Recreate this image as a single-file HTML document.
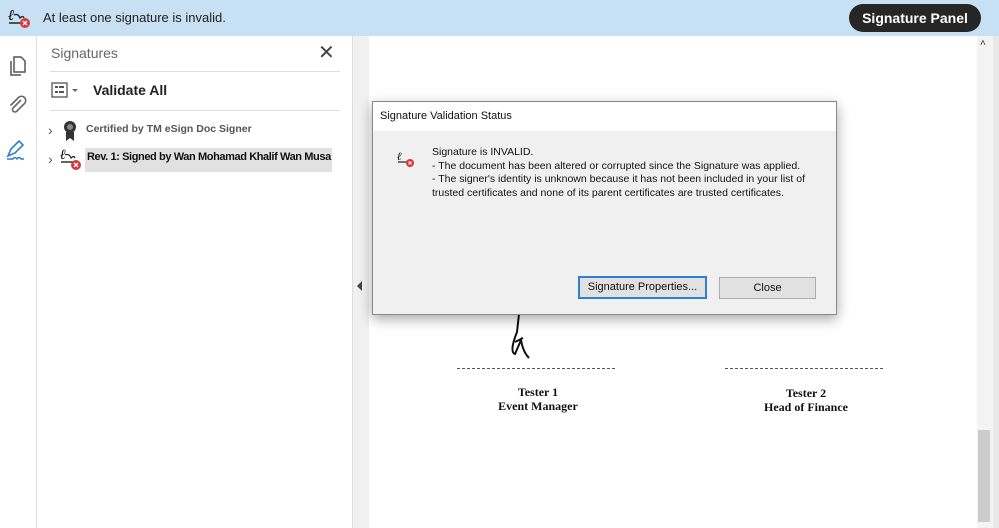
<!DOCTYPE html>
<html><head><style>
*{margin:0;padding:0;box-sizing:border-box}
body{width:999px;height:528px;overflow:hidden;position:relative;background:#fff;font-family:"Liberation Sans",sans-serif}
.abs{position:absolute}
</style></head><body>
<div class="abs" style="left:0;top:0;width:999px;height:36px;background:#c7e0f4"></div>
<svg class="abs" style="left:8px;top:6px" width="24" height="24"><text x="0" y="14" font-family="Liberation Serif" font-style="italic" font-weight="bold" font-size="15">&#x2113;</text><path d="M6 9 q4 -2 6 3 q3 -3 4 0" stroke="#222" fill="none" stroke-width="1.3"/><line x1="1" y1="17" x2="14" y2="17" stroke="#222" stroke-width="1.5"/><circle cx="17" cy="17" r="5" fill="#d7373f"/><path d="M15 15l4 4M19 15l-4 4" stroke="#fff" stroke-width="1.3"/></svg>
<div class="abs" style="left:43px;top:10px;font-size:13px;color:#222">At least one signature is invalid.</div>
<div class="abs" style="left:849px;top:4px;width:132px;height:28px;border-radius:14px;background:#262626;color:#fff;font-size:14px;font-weight:bold;text-align:center;line-height:28px">Signature Panel</div>
<div class="abs" style="left:0;top:36px;width:37px;height:492px;background:#fff;border-right:1px solid #ddd"></div>
<svg class="abs" style="left:7px;top:55px" width="22" height="22"><path d="M7 2h7l4 4v11H7z" fill="none" stroke="#555" stroke-width="1.5"/><path d="M4 6v14h10" fill="none" stroke="#555" stroke-width="1.5"/></svg>
<svg class="abs" style="left:6px;top:94px" width="22" height="22"><path d="M15 6l-8 8a2.5 2.5 0 0 0 3.5 3.5l8-8a4 4 0 0 0-6-6l-8 8" fill="none" stroke="#666" stroke-width="1.6"/></svg>
<svg class="abs" style="left:4px;top:138px" width="24" height="24"><path d="M4 18l3-7 8-8 4 4-8 8z" fill="none" stroke="#2d7fc7" stroke-width="1.6"/><path d="M3 21h6q2-3 4 0 2-3 4 0h3" fill="none" stroke="#2d7fc7" stroke-width="1.4"/></svg>
<div class="abs" style="left:51px;top:45px;font-size:14px;color:#666">Signatures</div>
<div class="abs" style="left:318px;top:40px;font-size:20px;color:#444">✕</div>
<div class="abs" style="left:50px;top:71px;width:290px;height:1px;background:#ddd"></div>
<svg class="abs" style="left:51px;top:82px" width="30" height="18"><rect x="1" y="1" width="15" height="14" fill="none" stroke="#555" stroke-width="1.3"/><rect x="4" y="4" width="3" height="2" fill="#555"/><rect x="4" y="9" width="3" height="2" fill="#555"/><rect x="8" y="4" width="5" height="2" fill="#555"/><rect x="8" y="9" width="5" height="2" fill="#555"/><path d="M21 7h6l-3 3z" fill="#666"/></svg>
<div class="abs" style="left:93px;top:82px;font-size:14px;font-weight:bold;color:#222">Validate All</div>
<div class="abs" style="left:50px;top:110px;width:290px;height:1px;background:#ddd"></div>
<div class="abs" style="left:48px;top:122px;font-size:14px;color:#555">›</div>
<svg class="abs" style="left:62px;top:120px" width="16" height="22"><circle cx="8" cy="7" r="6" fill="#333"/><circle cx="8" cy="7" r="3" fill="#888"/><path d="M4 12v9l4-3 4 3v-9" fill="#333"/></svg>
<div class="abs" style="left:86px;top:123px;font-size:10.5px;font-weight:bold;color:#555">Certified by TM eSign Doc Signer</div>
<div class="abs" style="left:85px;top:148px;width:247px;height:24px;background:#e1e1e1"></div>
<div class="abs" style="left:48px;top:151px;font-size:14px;color:#555">›</div>
<svg class="abs" style="left:60px;top:147px" width="24" height="24"><text x="0" y="12" font-family="Liberation Serif" font-style="italic" font-weight="bold" font-size="14">&#x2113;</text><path d="M5 8 q4 -2 6 3 q3 -3 4 0" stroke="#222" fill="none" stroke-width="1.2"/><line x1="1" y1="15" x2="13" y2="15" stroke="#222" stroke-width="1.4"/><circle cx="16" cy="18" r="5" fill="#d7373f"/><path d="M14 16l4 4M18 16l-4 4" stroke="#fff" stroke-width="1.3"/></svg>
<div class="abs" style="left:87px;top:151px;font-size:11px;font-weight:bold;color:#111;letter-spacing:-0.4px">Rev. 1: Signed by Wan Mohamad Khalif Wan Musa</div>
<div class="abs" style="left:352px;top:36px;width:17px;height:492px;background:#f0f0f0;border-left:1px solid #ddd"></div>
<div class="abs" style="left:357px;top:281px;width:0;height:0;border-top:5px solid transparent;border-bottom:5px solid transparent;border-right:5px solid #444"></div>
<div class="abs" style="left:977px;top:36px;width:16px;height:492px;background:#f3f3f3"></div>
<div class="abs" style="left:978px;top:430px;width:12px;height:92px;background:#cdcdcd"></div>
<div class="abs" style="left:993px;top:36px;width:6px;height:492px;background:#e8e8e8"></div>
<div class="abs" style="left:980px;top:38px;font-size:10px;color:#333">˄</div>
<svg class="abs" style="left:505px;top:312px" width="30" height="50"><path d="M14 2 L12 20 Q4 40 10 42 L16 28 Q18 40 24 46 M10 30 L18 26" stroke="#111" fill="none" stroke-width="2"/></svg>
<div class="abs" style="left:457px;top:368px;width:158px;border-top:1px dashed #555"></div>
<div class="abs" style="left:725px;top:368px;width:158px;border-top:1px dashed #555"></div>
<div class="abs" style="left:458px;top:385px;width:160px;text-align:center;font-family:'Liberation Serif',serif;font-weight:bold;font-size:12px;line-height:14px;color:#111">Tester 1<br>Event Manager</div>
<div class="abs" style="left:726px;top:386px;width:160px;text-align:center;font-family:'Liberation Serif',serif;font-weight:bold;font-size:12px;line-height:14px;color:#111">Tester 2<br>Head of Finance</div>
<div class="abs" style="left:372px;top:101px;width:465px;height:214px;background:#f0f0f0;border:1px solid #888;box-shadow:0 4px 12px rgba(0,0,0,.35)">
<div style="height:29px;background:#fff;font-size:11px;color:#111;padding:8px 0 0 7px">Signature Validation Status</div>
<svg class="abs" style="left:24px;top:47px" width="20" height="20"><text x="0" y="11" font-family="Liberation Serif" font-style="italic" font-weight="bold" font-size="11">&#x2113;</text><line x1="1" y1="13" x2="10" y2="13" stroke="#222" stroke-width="1.2"/><circle cx="13" cy="14" r="4" fill="#d7373f"/><path d="M11.5 12.5l3 3M14.5 12.5l-3 3" stroke="#fff" stroke-width="1"/></svg>
<div class="abs" style="left:59px;top:44px;font-size:10.5px;line-height:13.5px;color:#111">Signature is INVALID.<br>- The document has been altered or corrupted since the Signature was applied.<br>- The signer's identity is unknown because it has not been included in your list of<br>trusted certificates and none of its parent certificates are trusted certificates.</div>
<div class="abs" style="left:205px;top:174px;width:129px;height:23px;background:#e1e1e1;border:2px solid #2f7fd0;font-size:11px;text-align:center;line-height:19px;color:#111">Signature Properties...</div>
<div class="abs" style="left:346px;top:175px;width:97px;height:22px;background:#e1e1e1;border:1px solid #adadad;font-size:11px;text-align:center;line-height:20px;color:#111">Close</div>
</div>
</body></html>
